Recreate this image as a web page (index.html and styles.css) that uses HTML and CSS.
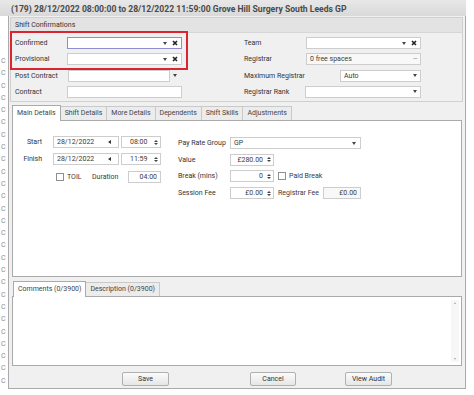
FILE: index.html
```html
<!DOCTYPE html>
<html>
<head>
<meta charset="utf-8">
<title>Shift</title>
<link rel="stylesheet" href="styles.css">
</head>
<body>
<div class="screen">
  <div class="titlebar">(179) 28/12/2022 08:00:00 to 28/12/2022 11:59:00 Grove Hill Surgery South Leeds GP</div>
  <div class="backdrop">C<br>C<br>C<br>C<br>C<br>C<br>C<br>C<br>C<br>C<br>C<br>C<br>C<br>C<br>C<br>C<br>C<br>C<br>C<br>C<br>C<br>C<br>C<br>C<br>C<br>C<br>C</div>
  <div class="dialog">
    <div class="group">
      <div class="group-head">Shift Confirmations</div>
      <div class="group-body">
        <span class="lbl">Confirmed</span>
        <div class="field focus"><span class="grow"></span><span class="dd"></span><svg class="xic" viewBox="0 0 6 6"><path d="M1 1L5 5M5 1L1 5"/></svg></div>
        <span></span>
        <span class="lbl">Team</span>
        <div class="field"><span class="grow"></span><span class="dd"></span><svg class="xic" viewBox="0 0 6 6"><path d="M1 1L5 5M5 1L1 5"/></svg></div>

        <span class="lbl">Provisional</span>
        <div class="field"><span class="grow"></span><span class="dd"></span><svg class="xic" viewBox="0 0 6 6"><path d="M1 1L5 5M5 1L1 5"/></svg></div>
        <span></span>
        <span class="lbl">Registrar</span>
        <div class="field ro"><span class="grow">0 free spaces</span><span class="dots">···</span></div>

        <span class="lbl">Post Contract</span>
        <div class="cell"><div class="field post"></div><span class="dd out"></span></div>
        <span></span>
        <span class="lbl">Maximum Registrar</span>
        <div class="cell end"><div class="field maxreg"><span class="grow">Auto</span><span class="dd"></span></div></div>

        <span class="lbl">Contract</span>
        <div class="field"></div>
        <span></span>
        <span class="lbl">Registrar Rank</span>
        <div class="field rank"><span class="grow"></span><span class="dd"></span></div>
      </div>
      <div class="highlight"></div>
    </div>

    <div class="tabstrip">
      <span class="tab active">Main Details</span>
      <span class="tab">Shift Details</span>
      <span class="tab">More Details</span>
      <span class="tab">Dependents</span>
      <span class="tab">Shift Skills</span>
      <span class="tab">Adjustments</span>
    </div>
    <div class="panel">
      <div class="left-block">
        <span class="lbl2">Start</span>
        <div class="field date"><span class="grow">28/12/2022</span><span class="larr"></span></div>
        <div class="field time"><span class="grow">08:00</span><span class="spin"><i class="up"></i><i class="down"></i></span></div>

        <span class="lbl2">Finish</span>
        <div class="field date"><span class="grow">28/12/2022</span><span class="larr"></span></div>
        <div class="field time"><span class="grow">11:59</span><span class="spin"><i class="up"></i><i class="down"></i></span></div>

        <span></span>
        <div class="toil-row">
          <span class="check"></span>
          <span class="toil">TOIL</span>
          <span class="dur">Duration</span>
          <div class="field duration"><span class="grow num">04:00</span></div>
        </div>
      </div>
      <div class="right-block">
        <span class="lbl">Pay Rate Group</span>
        <div class="field payrate"><span class="grow">GP</span><span class="dd"></span></div>

        <span class="lbl">Value</span>
        <div class="row"><div class="field money"><span class="grow num">£280.00</span><span class="spin"><i class="up"></i><i class="down"></i></span></div></div>

        <span class="lbl">Break (mins)</span>
        <div class="row"><div class="field money"><span class="grow num">0</span><span class="spin"><i class="up"></i><i class="down"></i></span></div><span class="check cb2"></span><span class="paid">Paid Break</span></div>

        <span class="lbl">Session Fee</span>
        <div class="row"><div class="field money"><span class="grow num">£0.00</span><span class="spin"><i class="up"></i><i class="down"></i></span></div><span class="regfee">Registrar Fee</span><div class="field ro regbox"><span class="grow num">£0.00</span></div></div>
      </div>
    </div>

    <div class="tabstrip lower">
      <span class="tab active">Comments (0/3900)</span>
      <span class="tab">Description (0/3900)</span>
    </div>
    <div class="comment-box">
      <div class="vscroll"><i class="sup"></i><i class="sdown"></i></div>
    </div>

    <div class="buttons">
      <span class="btn save">Save</span>
      <span class="btn cancel">Cancel</span>
      <span class="btn audit">View Audit</span>
    </div>
  </div>
</div>
</body>
</html>
```

FILE: styles.css
```css
* { box-sizing: border-box; margin: 0; padding: 0; }
html, body { width: 474px; height: 395px; overflow: hidden; background: #fff; }
body { font-family: Roboto, "Liberation Sans", Arial, sans-serif; font-size: 7px; color: #3a3a3a; }

.screen {
  display: grid;
  grid-template-columns: 8px 458px 8px;
  grid-template-rows: 16px 373px 6px;
  width: 474px;
  height: 395px;
}
.titlebar {
  grid-column: 1 / 3;
  grid-row: 1;
  background: linear-gradient(#e8e8e8, #d9d9d9);
  font-weight: bold;
  font-size: 8.6px;
  color: #4a4a4a;
  padding-left: 11px;
  line-height: 18px;
  white-space: nowrap;
  overflow: hidden;
}
.backdrop {
  grid-column: 1;
  grid-row: 2 / 4;
  color: #8c8c8c;
  font-size: 7px;
  line-height: 12.3px;
  padding-top: 39px;
  padding-left: 1px;
  overflow: hidden;
}
.dialog {
  grid-column: 2;
  grid-row: 2;
  border: 1px solid #aaa;
  border-top: 0;
  background: #f0f0f0;
  display: flex;
  flex-direction: column;
}

/* group */
.group {
  position: relative;
  margin: 1px 2px 0 1px;
  height: 85px;
  border: 1px solid #d0d0d0;
  display: flex;
  flex-direction: column;
}
.group-head {
  height: 15px;
  background: #e3e3e3;
  border-bottom: 1px solid #d6d6d6;
  padding-left: 4px;
  line-height: 14px;
  color: #333;
}
.group-body {
  display: grid;
  grid-template-columns: 52px 115px 62px 62px 115px;
  grid-template-rows: repeat(4, 12px);
  row-gap: 4.33px;
  padding: 4px 0 0 4px;
  align-items: center;
}
.lbl { white-space: nowrap; color: #333; }
.cell { display: flex; align-items: center; height: 12px; }
.cell.end { justify-content: flex-end; }

.field {
  height: 12px;
  border: 1px solid #cdcdcd;
  background: #fff;
  display: flex;
  align-items: center;
  padding: 0 3px;
  gap: 5px;
  white-space: nowrap;
}
.field.focus { border-color: #8d8dcf; }
.field.ro { background: #f8f8f8; }
.field.post { width: 102px; margin-left: 1px; }
.field.maxreg { width: 81px; }
.field.rank { margin-left: -1px; }
.grow { flex: 1; overflow: hidden; }
.num { text-align: right; }

.dd {
  width: 0; height: 0;
  border-left: 2.5px solid transparent;
  border-right: 2.5px solid transparent;
  border-top: 3px solid #444;
}
.dd.out { margin-left: 3px; }
.xic { width: 6px; height: 6px; fill: none; stroke: #222; stroke-width: 1.6; }
.dots { color: #555; font-size: 7px; letter-spacing: -0.5px; }

.highlight {
  position: absolute;
  left: -1px;
  top: 13px;
  width: 178px;
  height: 39px;
  border: 2px solid #dc2430;
}

/* tabs */
.tabstrip {
  display: flex;
  align-items: flex-end;
  height: 15px;
  margin: 3px 3px 0 3px;
}
.tab {
  height: 14px;
  padding: 0 4px;
  border: 1px solid #c9c9c9;
  border-bottom: 0;
  background: #ececec;
  line-height: 13px;
  color: #444;
  white-space: nowrap;
  margin-right: -1px;
}
.tab.active {
  height: 16px;
  margin-bottom: -1px;
  background: #fff;
  border-color: #aaa;
  position: relative;
  z-index: 1;
  line-height: 15px;
}
.panel {
  margin: 0 3px;
  height: 157px;
  border: 1px solid #aaa;
  background: #fff;
  display: flex;
  align-items: flex-start;
  padding-top: 15px;
}
.left-block {
  display: grid;
  grid-template-columns: 40px 66px 42px;
  grid-template-rows: 12px 12px 12px;
  row-gap: 5px;
  align-items: center;
}
.lbl2 { text-align: right; padding-right: 11px; color: #333; }
.field.time { margin-left: 2px; padding-left: 8px; padding-right: 2px; }
.larr {
  width: 0; height: 0;
  border-top: 2px solid transparent;
  border-bottom: 2px solid transparent;
  border-right: 3px solid #333;
  margin-right: 4px;
}
.spin { display: flex; flex-direction: column; gap: 1px; }
.spin i { display: block; width: 0; height: 0; border-left: 2px solid transparent; border-right: 2px solid transparent; }
.spin .up { border-bottom: 2.5px solid #444; }
.spin .down { border-top: 2.5px solid #444; }
.toil-row {
  grid-column: 2 / 4;
  display: flex;
  align-items: center;
  margin-top: 2px;
  height: 12px;
}
.check { width: 8px; height: 8px; border: 1px solid #8f8f8f; background: #fff; margin-left: 3px; }
.toil { width: 25px; margin-left: 3px; }
.dur { width: 36px; }
.field.duration { width: 33px; }

.right-block {
  margin-left: 17px;
  margin-top: 1px;
  display: grid;
  grid-template-columns: 52px auto;
  grid-template-rows: repeat(4, 12px);
  row-gap: 4.7px;
  align-items: center;
}
.row { display: flex; align-items: center; height: 12px; }
.field.payrate { width: 131px; padding-right: 4px; }
.field.money { width: 44px; padding-right: 2px; gap: 4px; }
.cb2 { margin-left: 4px; }
.paid { margin-left: 3px; }
.regfee { margin-left: 4px; width: 45px; white-space: nowrap; }
.field.regbox { width: 38px; }

.tabstrip.lower { margin-top: 4px; margin-left: 4px; }
.tabstrip.lower .tab { padding: 0 4px; }
.comment-box {
  margin: 0 3px;
  height: 70px;
  border: 1px solid #aaa;
  background: #fff;
  display: flex;
  justify-content: flex-end;
}
.vscroll {
  width: 8px;
  margin: 3px 2px 3px 0;
  background: #f7f7f7;
  display: flex;
  flex-direction: column;
  justify-content: space-between;
  align-items: center;
  padding: 2px 0;
}
.vscroll i { display: block; width: 0; height: 0; border-left: 1.5px solid transparent; border-right: 1.5px solid transparent; }
.vscroll .sup { border-bottom: 2px solid #aaa; }
.vscroll .sdown { border-top: 2px solid #aaa; }

.buttons { display: flex; align-items: flex-start; padding-top: 6px; height: 22px; }
.btn {
  height: 14px;
  border: 1px solid #b0b0b0;
  border-radius: 2px;
  background: linear-gradient(#fbfbfb, #e6e6e6);
  text-align: center;
  line-height: 12px;
  color: #333;
}
.save { margin-left: 113px; width: 47px; }
.cancel { margin-left: 81px; width: 46px; }
.audit { margin-left: 49px; width: 47px; }
```
